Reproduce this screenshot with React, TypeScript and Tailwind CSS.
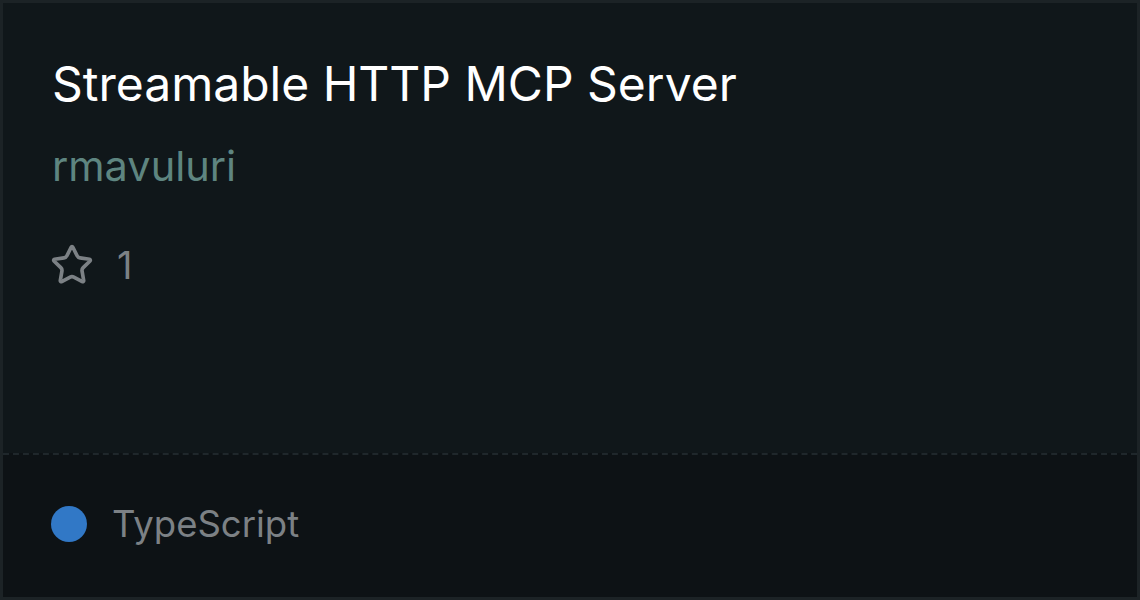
import React from 'react'

function StarIcon() {
    return (
        <svg width="44" height="44" viewBox="0 0 24 24" fill="none" stroke="currentColor" strokeWidth="2" strokeLinecap="round" strokeLinejoin="round">
            <path d="M11.525 2.295a.53.53 0 0 1 .95 0l2.31 4.679a2.123 2.123 0 0 0 1.595 1.16l5.166.756a.53.53 0 0 1 .294.904l-3.736 3.638a2.123 2.123 0 0 0-.611 1.878l.882 5.14a.53.53 0 0 1-.771.56l-4.618-2.428a2.122 2.122 0 0 0-1.973 0L6.396 21.01a.53.53 0 0 1-.77-.56l.881-5.139a2.122 2.122 0 0 0-.611-1.879L2.16 9.795a.53.53 0 0 1 .294-.906l5.165-.755a2.122 2.122 0 0 0 1.597-1.16z" />
        </svg>
    )
}

function App() {
    return (
        <div className="w-[1140px] h-[600px] border-[3px] border-[#1c2326] bg-[#0d1215] flex flex-col" style={{ fontFamily: 'Inter, "Noto Sans", sans-serif' }}>
            <div className="flex flex-col h-[450px] px-[49px] pt-[51px] bg-[#10171a]">
                <div className="text-[48px] leading-[60px] text-white">Streamable HTTP MCP Server</div>
                <div className="mt-[26px] text-[41.5px] leading-[52px] text-[#5e8580]">rmavuluri</div>
                <div className="flex items-center gap-[23px] mt-[49px] -ml-[2px] text-[#7c8185]">
                    <StarIcon />
                    <span className="text-[38px] leading-[48px]">1</span>
                </div>
            </div>
            <div className="border-t-2 border-dashed border-[#1f272b]" />
            <div className="flex-1 flex items-center gap-[25px] px-[48px] pb-[4px]">
                <div className="w-[36px] h-[36px] rounded-full bg-[#3178c6]" />
                <span className="text-[36.5px] leading-[46px] text-[#7c8185]">TypeScript</span>
            </div>
        </div>
    )
}

export default App
